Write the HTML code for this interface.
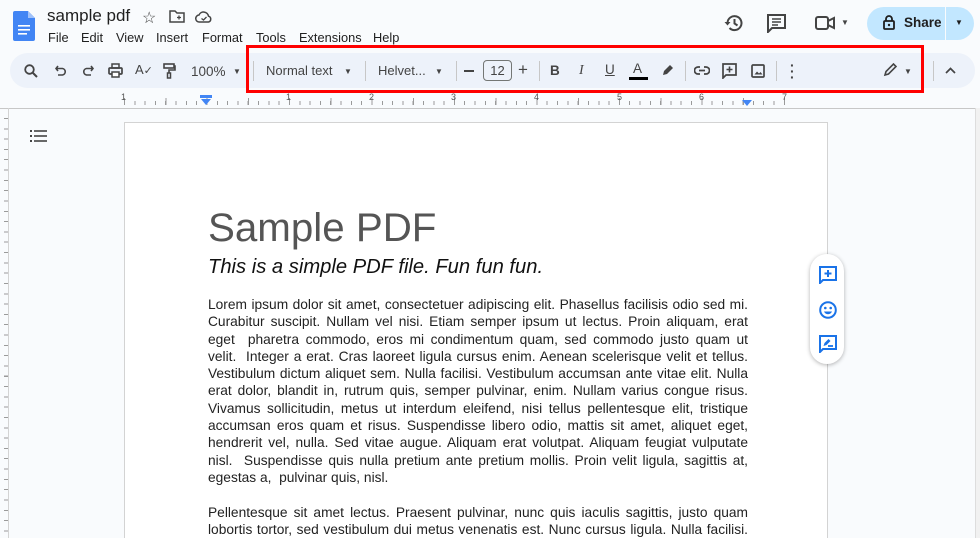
<!DOCTYPE html>
<html><head><meta charset="utf-8"><style>
*{margin:0;padding:0;box-sizing:border-box}
html,body{width:980px;height:538px;overflow:hidden}
body{background:#f9fbfd;font-family:"Liberation Sans",Arial,sans-serif;position:relative;color:#1f1f1f}
.abs{position:absolute}
.menu span{position:absolute;font-size:12.8px;white-space:nowrap}
.tb{left:10px;top:53px;width:965px;height:35px;background:#edf2fa;border-radius:18px}
.ic{position:absolute;top:62px}
.sep{position:absolute;top:61px;width:1px;height:20px;background:#c7c7c7}
.page{left:124px;top:122px;width:704px;height:416px;background:#fff;border:1px solid #d3d3d3;border-bottom:none}
.p{position:absolute;left:208px;width:540px;font-size:13.75px;line-height:17.3px;color:#222}
.p div{text-align:justify;text-align-last:justify;white-space:nowrap;height:17.3px}
.p div.l{text-align-last:left}
</style></head><body>
<svg class="abs" style="left:13px;top:11px" width="22" height="30" viewBox="0 0 22 30"><path d="M2 0h13l7 7v21a2 2 0 0 1-2 2H2a2 2 0 0 1-2-2V2a2 2 0 0 1 2-2z" fill="#4285f4"/><path d="M15 0v7h7z" fill="#a1c2fa"/><rect x="5" y="14" width="12" height="1.6" fill="#fff"/><rect x="5" y="18" width="12" height="1.6" fill="#fff"/><rect x="5" y="22" width="9" height="1.6" fill="#fff"/></svg>
<div class="abs" style="left:47px;top:6px;font-size:17px">sample pdf</div>
<div class="abs" style="left:142px;top:8px;font-size:16px;color:#444">☆</div>
<svg class="abs" style="left:169px;top:10px" width="16" height="13" viewBox="0 0 16 13"><path d="M1 1h5l2 2h7v9H1z" fill="none" stroke="#444" stroke-width="1.5"/><path d="M8 7.5h4M10 5.5v4" stroke="#444" stroke-width="1.3"/></svg>
<svg class="abs" style="left:195px;top:10px" width="18" height="13" viewBox="0 0 18 13"><path d="M4.5 12a3.5 3.5 0 0 1-.5-7 5 5 0 0 1 9.5 1.2A3 3 0 0 1 13.5 12z" fill="none" stroke="#444" stroke-width="1.5"/><path d="M6.5 8.5l2 1.5 3-3" fill="none" stroke="#444" stroke-width="1.3"/></svg>
<div class="abs menu" style="left:0;top:30px;width:500px;height:16px"><span style="left:48px">File</span><span style="left:81px">Edit</span><span style="left:116px">View</span><span style="left:156px">Insert</span><span style="left:202px">Format</span><span style="left:256px">Tools</span><span style="left:299px">Extensions</span><span style="left:373px">Help</span></div>
<svg class="abs" style="left:724px;top:13px" width="20" height="20" viewBox="0 0 20 20"><path d="M3.5 10a7 7 0 1 1 2 5" fill="none" stroke="#444" stroke-width="2"/><path d="M0.5 9h6l-3 3.5z" fill="#444"/><path d="M10.5 6v4.5l3 2" fill="none" stroke="#444" stroke-width="2"/></svg>
<svg class="abs" style="left:767px;top:14px" width="19" height="19" viewBox="0 0 19 19"><path d="M1 1h17v13H5l-4 4z" fill="none" stroke="#444" stroke-width="2"/><path d="M5 5h9M5 8h9M5 11h6" stroke="#444" stroke-width="1.5"/></svg>
<svg class="abs" style="left:815px;top:16px" width="20" height="14" viewBox="0 0 20 14"><rect x="1" y="1" width="12" height="12" rx="2" fill="none" stroke="#444" stroke-width="2"/><path d="M13 5l6-3v10l-6-3" fill="none" stroke="#444" stroke-width="2"/></svg>
<div class="abs" style="left:841px;top:18px;font-size:8px;color:#444">▼</div>
<div class="abs" style="left:867px;top:7px;width:107px;height:33px;border-radius:17px;background:#c2e7ff"></div>
<div class="abs" style="left:945px;top:7px;width:1px;height:33px;background:#f9fbfd"></div>
<svg class="abs" style="left:883px;top:15px" width="12" height="15" viewBox="0 0 12 15"><rect x="1" y="6" width="10" height="8" rx="1" fill="none" stroke="#1f1f1f" stroke-width="1.8"/><path d="M3 6V4a3 3 0 0 1 6 0v2" fill="none" stroke="#1f1f1f" stroke-width="1.8"/><circle cx="6" cy="10" r="1.2" fill="#1f1f1f"/></svg>
<div class="abs" style="left:904px;top:15px;font-size:13.5px;font-weight:bold;color:#1f1f1f">Share</div>
<div class="abs" style="left:955px;top:18px;font-size:8px">▼</div>
<div class="abs tb"></div>
<svg class="ic" style="left:24px;top:64px" width="14" height="14" viewBox="0 0 14 14"><circle cx="5.5" cy="5.5" r="4.3" fill="none" stroke="#444" stroke-width="1.8"/><path d="M8.5 8.5l4.5 4.5" stroke="#444" stroke-width="2"/></svg>
<svg class="ic" style="left:55px;top:65px" width="12" height="11" viewBox="0 0 12 11"><path d="M3 1L1 3.5 3 6M1 3.5h6.5a3.3 3.3 0 0 1 0 6.5H3" fill="none" stroke="#444" stroke-width="1.6"/></svg>
<svg class="ic" style="left:82px;top:65px" width="12" height="11" viewBox="0 0 12 11"><path d="M9 1l2 2.5L9 6M11 3.5H4.5a3.3 3.3 0 0 0 0 6.5H9" fill="none" stroke="#444" stroke-width="1.6"/></svg>
<svg class="ic" style="left:108px;top:63px" width="15" height="15" viewBox="0 0 15 15"><rect x="1" y="5" width="13" height="6" rx="1" fill="none" stroke="#444" stroke-width="1.7"/><rect x="4" y="1" width="7" height="4" fill="none" stroke="#444" stroke-width="1.5"/><rect x="4" y="9" width="7" height="5" fill="#fff" stroke="#444" stroke-width="1.5"/></svg>
<div class="abs" style="left:135px;top:62px;font-size:13px;color:#444">A<span style="font-size:11px">✓</span></div>
<svg class="ic" style="left:163px;top:63px" width="13" height="16" viewBox="0 0 13 16"><rect x="1" y="1" width="10" height="4" fill="none" stroke="#444" stroke-width="1.6"/><path d="M11 3h1v4H6v3" fill="none" stroke="#444" stroke-width="1.6"/><rect x="4.5" y="10" width="3" height="5" fill="none" stroke="#444" stroke-width="1.5"/></svg>
<div class="abs" style="left:191px;top:64px;font-size:13.5px;color:#444">100%</div>
<div class="abs" style="left:233px;top:67px;font-size:8px;color:#444">▼</div>
<div class="sep" style="left:253px"></div>
<div class="abs" style="left:266px;top:63px;font-size:13px;color:#444">Normal text</div>
<div class="abs" style="left:344px;top:67px;font-size:8px;color:#444">▼</div>
<div class="sep" style="left:365px"></div>
<div class="abs" style="left:378px;top:63px;font-size:13px;color:#444">Helvet...</div>
<div class="abs" style="left:435px;top:67px;font-size:8px;color:#444">▼</div>
<div class="sep" style="left:456px"></div>
<div class="abs" style="left:464px;top:70px;width:10px;height:1.6px;background:#444"></div>
<div class="abs" style="left:483px;top:60px;width:29px;height:21px;border:1px solid #747775;border-radius:4px;font-size:13px;text-align:center;line-height:19px;color:#444">12</div>
<div class="abs" style="left:518px;top:60px;font-size:17px;color:#444">+</div>
<div class="sep" style="left:539px"></div>
<div class="abs" style="left:550px;top:63px;font-size:13.5px;font-weight:bold;color:#444">B</div>
<div class="abs" style="left:579px;top:63px;font-size:14px;font-style:italic;font-family:'Liberation Serif',serif;color:#444">I</div>
<div class="abs" style="left:605px;top:62px;font-size:13.5px;color:#444;text-decoration:underline">U</div>
<div class="abs" style="left:633px;top:61px;font-size:13.5px;color:#444">A</div>
<div class="abs" style="left:629px;top:77px;width:19px;height:3px;background:#000"></div>
<svg class="ic" style="left:661px;top:63px" width="14" height="14" viewBox="0 0 14 14"><path d="M2 12l1-4 6-6 3 3-6 6z" fill="#444"/></svg>
<div class="sep" style="left:685px"></div>
<svg class="ic" style="left:694px;top:66px" width="16" height="9" viewBox="0 0 16 9"><path d="M6 1H4a3.5 3.5 0 0 0 0 7h2M10 1h2a3.5 3.5 0 0 1 0 7h-2M5 4.5h6" fill="none" stroke="#444" stroke-width="1.7"/></svg>
<svg class="ic" style="left:722px;top:63px" width="15" height="16" viewBox="0 0 15 16"><path d="M1 1h13v11H4l-3 3z" fill="none" stroke="#444" stroke-width="1.7"/><path d="M7.5 3.5v6M4.5 6.5h6" stroke="#444" stroke-width="1.6"/></svg>
<svg class="ic" style="left:751px;top:64px" width="14" height="14" viewBox="0 0 14 14"><rect x="1" y="1" width="12" height="12" rx="1" fill="none" stroke="#444" stroke-width="1.7"/><path d="M3.5 10.5l2.5-3 2 2 1.5-1.5 2 2.5z" fill="#444"/></svg>
<div class="sep" style="left:776px"></div>
<div class="abs" style="left:790px;top:62px;font-size:14px;font-weight:bold;color:#444;line-height:6px">·<br>·<br>·</div>
<svg class="ic" style="left:883px;top:63px" width="14" height="14" viewBox="0 0 14 14"><path d="M2 12l1-3.5 7.5-7.5 2.5 2.5-7.5 7.5z" fill="none" stroke="#444" stroke-width="1.6"/></svg>
<div class="abs" style="left:904px;top:67px;font-size:8px;color:#444">▼</div>
<div class="sep" style="left:933px"></div>
<svg class="ic" style="left:945px;top:67px" width="11" height="7" viewBox="0 0 11 7"><path d="M1 6l4.5-4.5L10 6" fill="none" stroke="#444" stroke-width="1.7"/></svg>
<div class="abs" style="left:246px;top:45px;width:678px;height:48px;border:3px solid #f00"></div>
<div class="abs" style="left:0;top:108px;width:980px;height:1px;background:#c7c7c7"></div>
<div class="abs" style="left:124px;top:101px;width:666px;height:4px;background:repeating-linear-gradient(90deg,#9a9a9a 0 1px,transparent 1px 10.31px)"></div>
<div class="abs" style="left:124px;top:98px;width:666px;height:7px;background:repeating-linear-gradient(90deg,#9a9a9a 0 1px,transparent 1px 41.25px)"></div>
<div class="abs" style="left:0;top:92px;font-size:9px;color:#555;width:980px;height:12px">
<span class="abs" style="left:121px">1</span><span class="abs" style="left:286px">1</span><span class="abs" style="left:369px">2</span><span class="abs" style="left:451px">3</span><span class="abs" style="left:534px">4</span><span class="abs" style="left:617px">5</span><span class="abs" style="left:699px">6</span><span class="abs" style="left:782px">7</span></div>
<div class="abs" style="left:200px;top:95px;width:12px;height:3px;background:#4285f4"></div>
<div class="abs" style="left:201px;top:99px;width:0;height:0;border-left:5px solid transparent;border-right:5px solid transparent;border-top:6px solid #4285f4"></div>
<div class="abs" style="left:742px;top:100px;width:0;height:0;border-left:5px solid transparent;border-right:5px solid transparent;border-top:6px solid #4285f4"></div>
<div class="abs" style="left:8px;top:108px;width:1px;height:430px;background:#d3d3d3"></div>
<div class="abs" style="left:4px;top:118px;width:4px;height:420px;background:repeating-linear-gradient(180deg,#9a9a9a 0 1px,transparent 1px 10.31px)"></div>
<svg class="abs" style="left:30px;top:129px" width="17" height="14" viewBox="0 0 17 14"><g fill="#444"><rect x="0" y="1" width="2" height="2"/><rect x="0" y="6" width="2" height="2"/><rect x="0" y="11" width="2" height="2"/><rect x="4" y="1.2" width="13" height="1.6"/><rect x="4" y="6.2" width="13" height="1.6"/><rect x="4" y="11.2" width="13" height="1.6"/></g></svg>
<div class="abs page"></div>
<div class="abs" style="left:975px;top:108px;width:5px;height:430px;background:#f1f1f1;border-left:1px solid #ddd"></div>
<div class="abs" style="left:208px;top:205px;font-size:40.3px;color:#555">Sample PDF</div>
<div class="abs" style="left:208px;top:256px;font-size:20.2px;font-style:italic;color:#111">This is a simple PDF file. Fun fun fun.</div>
<div class="p" style="top:296px">
<div>Lorem ipsum dolor sit amet, consectetuer adipiscing elit. Phasellus facilisis odio sed mi.</div>
<div>Curabitur suscipit. Nullam vel nisi. Etiam semper ipsum ut lectus. Proin aliquam, erat</div>
<div>eget &nbsp;pharetra commodo, eros mi condimentum quam, sed commodo justo quam ut</div>
<div>velit. &nbsp;Integer a erat. Cras laoreet ligula cursus enim. Aenean scelerisque velit et tellus.</div>
<div>Vestibulum dictum aliquet sem. Nulla facilisi. Vestibulum accumsan ante vitae elit. Nulla</div>
<div>erat dolor, blandit in, rutrum quis, semper pulvinar, enim. Nullam varius congue risus.</div>
<div>Vivamus sollicitudin, metus ut interdum eleifend, nisi tellus pellentesque elit, tristique</div>
<div>accumsan eros quam et risus. Suspendisse libero odio, mattis sit amet, aliquet eget,</div>
<div>hendrerit vel, nulla. Sed vitae augue. Aliquam erat volutpat. Aliquam feugiat vulputate</div>
<div>nisl. &nbsp;Suspendisse quis nulla pretium ante pretium mollis. Proin velit ligula, sagittis at,</div>
<div class="l">egestas a, &nbsp;pulvinar quis, nisl.</div>
<div class="l">&nbsp;</div>
<div>Pellentesque sit amet lectus. Praesent pulvinar, nunc quis iaculis sagittis, justo quam</div>
<div>lobortis tortor, sed vestibulum dui metus venenatis est. Nunc cursus ligula. Nulla facilisi.</div>
</div>
<div class="abs" style="left:810px;top:254px;width:34px;height:110px;border-radius:17px;background:#fff;box-shadow:0 1px 4px rgba(0,0,0,.3)"></div>
<svg class="abs" style="left:819px;top:266px" width="18" height="18" viewBox="0 0 18 18"><path d="M1 1h16v13H4l-3 3z" fill="none" stroke="#1a73e8" stroke-width="2"/><path d="M9 4v7M5.5 7.5h7" stroke="#1a73e8" stroke-width="2"/></svg>
<svg class="abs" style="left:819px;top:301px" width="18" height="18" viewBox="0 0 18 18"><circle cx="9" cy="9" r="7.8" fill="none" stroke="#1a73e8" stroke-width="2"/><circle cx="6.3" cy="7" r="1.3" fill="#1a73e8"/><circle cx="11.7" cy="7" r="1.3" fill="#1a73e8"/><path d="M5 10.5a4.3 4.3 0 0 0 8 0z" fill="#1a73e8"/></svg>
<svg class="abs" style="left:819px;top:335px" width="18" height="18" viewBox="0 0 18 18"><path d="M1 1h16v13H4l-3 3z" fill="none" stroke="#1a73e8" stroke-width="2"/><path d="M4.5 11l1-3 4-4 2 2-4 4z" fill="#1a73e8"/><path d="M9 11h5" stroke="#1a73e8" stroke-width="1.8"/></svg>
</body></html>
